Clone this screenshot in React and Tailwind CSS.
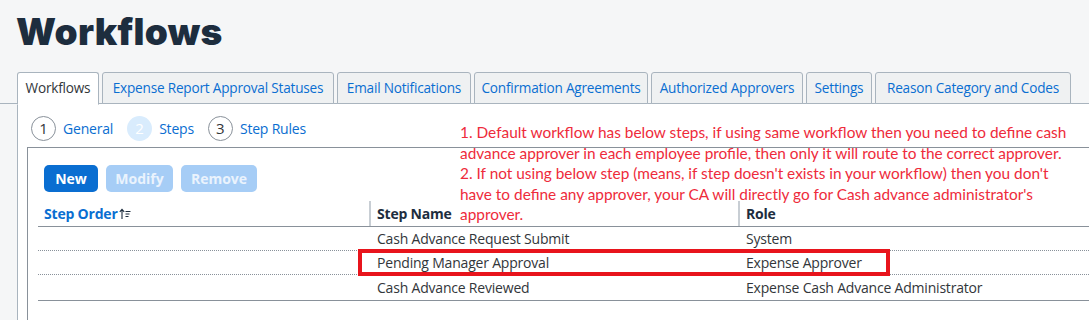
import React from "react";

const tabs = [
  { label: "Workflows", w: "w-[82px]", active: true },
  { label: "Expense Report Approval Statuses", w: "w-[232px]" },
  { label: "Email Notifications", w: "w-[134px]" },
  { label: "Confirmation Agreements", w: "w-[174px]" },
  { label: "Authorized Approvers", w: "w-[152px]" },
  { label: "Settings", w: "w-[66px]" },
  { label: "Reason Category and Codes", w: "w-[196px]" },
];

const steps = [
  { n: "1", label: "General" },
  { n: "2", label: "Steps", active: true },
  { n: "3", label: "Step Rules" },
];

const rows = [
  { name: "Cash Advance Request Submit", role: "System" },
  { name: "Pending Manager Approval", role: "Expense Approver" },
  { name: "Cash Advance Reviewed", role: "Expense Cash Advance Administrator" },
];

const SortIcon = () => (
  <svg width="12" height="12" viewBox="0 0 12 12" className="ml-[1px]">
    <path d="M3 11V1.5M0.8 3.8L3 1.3 5.2 3.8" stroke="#1d2d3e" strokeWidth="1.1" fill="none" />
    <path d="M6.5 3.5h5M6.5 6h4M6.5 8.5h3" stroke="#1d2d3e" strokeWidth="1" />
  </svg>
);

export default function App() {
  return (
    <div className="w-[1089px] h-[320px] overflow-hidden bg-[#f5f6f7] relative" style={{ fontFamily: "'Open Sans', 'Noto Sans', sans-serif" }}>
      {/* Title */}
      <div className="pl-[16px] pt-[8px] h-[72px]">
        <h1 className="text-[37px] leading-[48px] font-black text-[#1d2d3e] tracking-[0.3px]" style={{ fontFamily: "Inter, Lato, sans-serif" }}>
          Workflows
        </h1>
      </div>

      {/* Tabs */}
      <div className="flex pl-[17px] gap-[3px] h-[32px] border-b border-[#a9b4be]">
        {tabs.map((t) => (
          <div
            key={t.label}
            className={`${t.w} h-[32px] flex items-center justify-center rounded-t-[3px] border border-[#a9b4be] text-[13.6px] tracking-[-0.2px] ${
              t.active ? "bg-white border-b-white text-[#32363a] h-[33px]" : "bg-[#eff1f2] text-[#0a6ed1]"
            }`}
          >
            {t.label}
          </div>
        ))}
      </div>

      {/* Panel */}
      <div className="ml-[17px] bg-white border-l border-[#a9b4be] h-[217px] pl-[9px]">
        {/* Steps */}
        <div className="flex items-center h-[43px] pt-[6px] pl-[4px]">
          {steps.map((s) => (
            <div key={s.n} className="flex items-center mr-[14px]">
              <span
                className={`w-[25px] h-[25px] rounded-full flex items-center justify-center text-[15px] ${
                  s.active ? "bg-[#d9ecfd] text-white" : "border border-[#89919a] text-[#32363a]"
                }`}
              >
                {s.n}
              </span>
              <span className="ml-[7px] text-[14px] text-[#0a6ed1] tracking-[-0.2px]">{s.label}</span>
            </div>
          ))}
        </div>

        {/* Inner box */}
        <div className="border-t border-l border-[#89919a] h-[174px] pl-[10px]">
          <div className="flex gap-[8px] pt-[17px] pl-[6px] h-[53px]">
            <button className="w-[54px] h-[27px] rounded-[5px] bg-[#0a6ed1] text-white text-[14px] font-bold">New</button>
            <button className="w-[67px] h-[27px] rounded-[5px] bg-[#a6cdf6] text-[#eaf3fd] text-[14px] font-bold">Modify</button>
            <button className="w-[76px] h-[27px] rounded-[5px] bg-[#a6cdf6] text-[#eaf3fd] text-[14px] font-bold">Remove</button>
          </div>

          {/* Table */}
          <div className="text-[14px] text-[#32363a]">
            <div className="grid grid-cols-[331px_369px_1fr] h-[26px] border-b border-[#89919a] items-center">
              <div className="pl-[6px] flex items-center font-bold text-[#0a6ed1] tracking-[-0.2px]">
                Step Order
                <SortIcon />
              </div>
              <div className="border-l-2 border-[#c8ced4] h-full flex items-center pl-[6px] font-bold text-[#1d2d3e] tracking-[-0.2px]">Step Name</div>
              <div className="border-l-2 border-[#c8ced4] h-full flex items-center pl-[6px] font-bold text-[#1d2d3e] tracking-[-0.2px]">Role</div>
            </div>
            {rows.map((r, i) => (
              <div
                key={r.name}
                className={`grid grid-cols-[331px_369px_1fr] h-[24px] items-center ${
                  i < rows.length - 1 ? "border-b border-dotted border-[#89919a]" : "border-b border-[#89919a] h-[26px]"
                }`}
              >
                <div />
                <div className="pl-[8px] tracking-[-0.2px]">{r.name}</div>
                <div className="pl-[8px] tracking-[-0.2px]">{r.role}</div>
              </div>
            ))}
          </div>
        </div>
      </div>

      {/* Annotation overlay */}
      <div
        className="absolute left-[460px] top-[122px] w-[615px] text-[15.4px] leading-[20.5px] text-[#ee2b3b]"
        style={{ fontFamily: "Lato, sans-serif" }}
      >
        <p>1. Default workflow has below steps, if using same workflow then you need to define cash advance approver in each employee profile, then only it will route to the correct approver.</p>
        <p>2. If not using below step (means, if step doesn't exists in your workflow) then you don't have to define any approver, your CA will directly go for Cash advance administrator's approver.</p>
      </div>

      {/* Highlight box */}
      <div className="absolute left-[358px] top-[249px] w-[532px] h-[27px] border-[4px] border-[#e8141c]" />
    </div>
  );
}
